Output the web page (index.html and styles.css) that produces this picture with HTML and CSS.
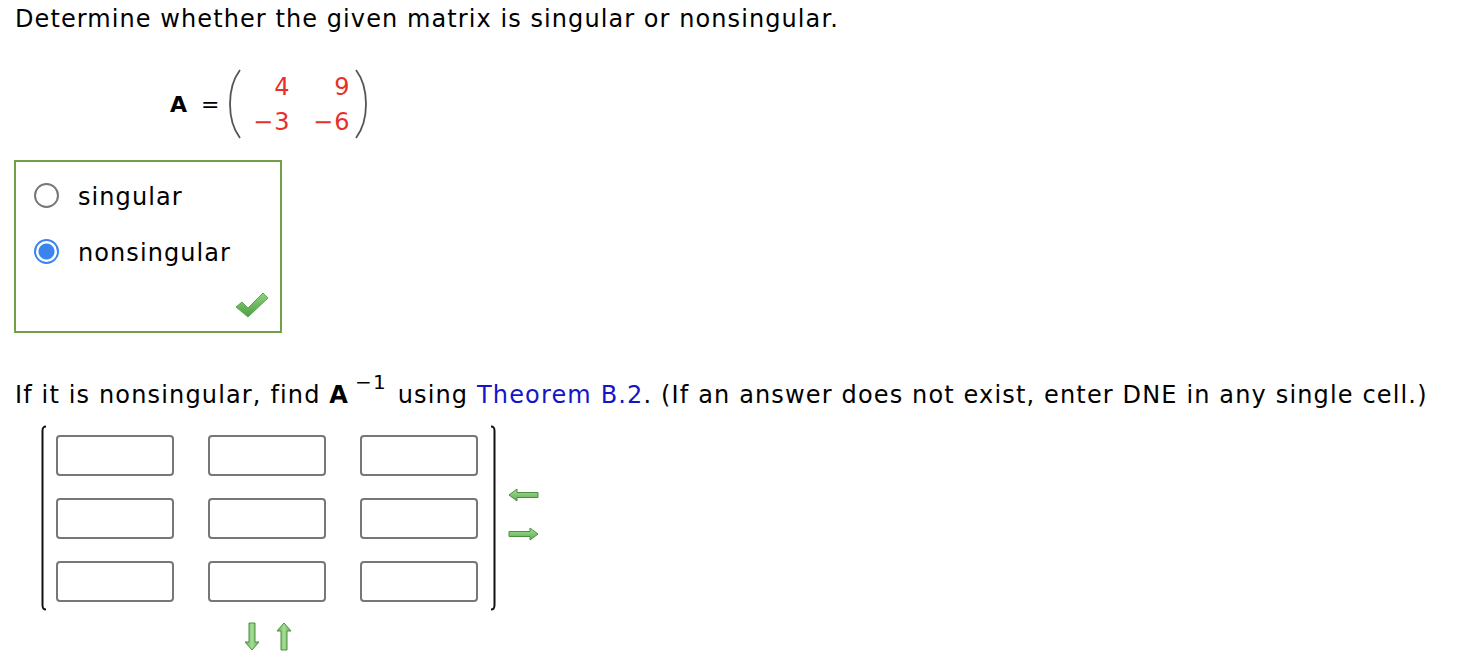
FILE: index.html
```html
<!DOCTYPE html>
<html>
<head>
<meta charset="utf-8">
<link rel="stylesheet" href="styles.css">
</head>
<body>
<div class="page">
  <p class="prompt">Determine whether the given matrix is singular or nonsingular.</p>

  <div class="given">
    <span class="lhs"><b>A</b> =</span>
    <svg class="paren" width="14" height="72" viewBox="0 0 14 72"><path d="M12 2 C3 14 2 28 2 36 C2 44 3 58 12 70" fill="none" stroke="#555" stroke-width="1.8"/></svg>
    <div class="entries">
      <span>4</span><span>9</span>
      <span>&minus;3</span><span>&minus;6</span>
    </div>
    <svg class="paren" width="14" height="72" viewBox="0 0 14 72"><path d="M2 2 C11 14 12 28 12 36 C12 44 11 58 2 70" fill="none" stroke="#555" stroke-width="1.8"/></svg>
  </div>

  <div class="choices">
    <label class="choice"><span class="radio"></span>singular</label>
    <label class="choice"><span class="radio checked"></span>nonsingular</label>
    <svg class="check" width="36" height="30" viewBox="0 0 36 30">
      <defs>
        <linearGradient id="cg" x1="0" y1="0" x2="0" y2="1">
          <stop offset="0" stop-color="#8fd27e"/>
          <stop offset="1" stop-color="#4e9e45"/>
        </linearGradient>
      </defs>
      <path d="M2 17 L8 12 L14 18 L29 3 L34 8 L14 27 Z" fill="url(#cg)" stroke="#5aa850" stroke-width="1" stroke-linejoin="round"/>
    </svg>
  </div>

  <p class="prompt second">If it is nonsingular, find <b>A</b><sup>&minus;1</sup> using <span class="link">Theorem B.2</span>. (If an answer does not exist, enter DNE in any single cell.)</p>

  <div class="answer">
    <div class="matrix-row">
      <svg class="bracket" width="8" height="186" viewBox="0 0 8 186"><path d="M6 1.5 C3 1.5 2.5 3 2.5 6 L2.5 180 C2.5 183 3 184.5 6 184.5" fill="none" stroke="#111" stroke-width="2"/></svg>
      <div class="cells">
        <input class="cell" type="text"><input class="cell" type="text"><input class="cell" type="text">
        <input class="cell" type="text"><input class="cell" type="text"><input class="cell" type="text">
        <input class="cell" type="text"><input class="cell" type="text"><input class="cell" type="text">
      </div>
      <svg class="bracket" width="8" height="186" viewBox="0 0 8 186"><path d="M2 1.5 C5 1.5 5.5 3 5.5 6 L5.5 180 C5.5 183 5 184.5 2 184.5" fill="none" stroke="#111" stroke-width="2"/></svg>
      <div class="col-arrows">
        <svg width="31" height="14" viewBox="0 0 31 14">
          <defs>
            <linearGradient id="hg" x1="0" y1="0" x2="0" y2="1">
              <stop offset="0" stop-color="#a6dd96"/>
              <stop offset="1" stop-color="#5fae52"/>
            </linearGradient>
            <linearGradient id="vg" x1="0" y1="0" x2="1" y2="0">
              <stop offset="0" stop-color="#5fae52"/>
              <stop offset="0.5" stop-color="#a6dd96"/>
              <stop offset="1" stop-color="#5fae52"/>
            </linearGradient>
          </defs>
          <path d="M1 7 L9 1 L9 4.5 L30 4.5 L30 9.5 L9 9.5 L9 13 Z" fill="url(#hg)" stroke="#4a8f40" stroke-width="1" stroke-linejoin="round"/>
        </svg>
        <svg width="31" height="14" viewBox="0 0 31 14"><path d="M30 7 L22 1 L22 4.5 L1 4.5 L1 9.5 L22 9.5 L22 13 Z" fill="url(#hg)" stroke="#4a8f40" stroke-width="1" stroke-linejoin="round"/></svg>
      </div>
    </div>
    <div class="row-arrows">
      <svg width="16" height="29" viewBox="0 0 16 29"><path d="M8 28 L1 20 L5 20 L5 1 L11 1 L11 20 L15 20 Z" fill="url(#vg)" stroke="#4a8f40" stroke-width="1" stroke-linejoin="round"/></svg>
      <svg width="16" height="29" viewBox="0 0 16 29"><path d="M8 1 L1 9 L5 9 L5 28 L11 28 L11 9 L15 9 Z" fill="url(#vg)" stroke="#4a8f40" stroke-width="1" stroke-linejoin="round"/></svg>
    </div>
  </div>
</div>
</body>
</html>
```

FILE: styles.css
```css
html, body {
  margin: 0;
  padding: 0;
  background: #fff;
}
body {
  font-family: "DejaVu Sans", Verdana, sans-serif;
  font-size: 24px;
  color: #000;
}
.page {
  padding: 4px 0 0 15px;
}
.prompt {
  margin: 0;
  line-height: 30px;
  white-space: nowrap;
  letter-spacing: 1.08px;
}
.given {
  display: flex;
  align-items: center;
  margin: 34px 0 0 155px;
  height: 72px;
}
.lhs {
  font-size: 22px;
  margin-right: 9px;
  word-spacing: 7px;
}
.paren {
  display: block;
}
.entries {
  display: grid;
  grid-template-columns: 48px 60px;
  row-gap: 5px;
  color: #e8302a;
  font-size: 24px;
  line-height: 30px;
  margin: 0 4px 0 0;
  letter-spacing: 1px;
}
.entries span {
  text-align: right;
}
.choices {
  width: 264px;
  height: 169px;
  border: 2px solid #73a047;
  margin: 20px 0 0 -1px;
  position: relative;
  box-sizing: content-box;
  padding: 0;
}
.choice {
  display: flex;
  align-items: center;
  height: 30px;
  margin-left: 18px;
  letter-spacing: 1.08px;
}
.choice:first-child {
  margin-top: 20px;
}
.choice + .choice {
  margin-top: 26px;
}
.radio {
  width: 21px;
  height: 21px;
  border: 2px solid #777;
  border-radius: 50%;
  margin-right: 19px;
  box-sizing: content-box;
  flex: none;
  position: relative;
  top: -2px;
}
.radio.checked {
  border: 2px solid #3a84f0;
  background: radial-gradient(circle, #3a84f0 0 7.5px, #fff 8.5px);
}
.check {
  position: absolute;
  right: 10px;
  bottom: 11px;
}
.second {
  margin-top: 47px;
  letter-spacing: 1.15px;
}
sup {
  font-size: 20px;
  vertical-align: 0;
  position: relative;
  top: -14px;
  margin-left: 6px;
  margin-right: 2px;
}
.link {
  color: #1515c8;
}
.answer {
  margin: 14px 0 0 25px;
}
.matrix-row {
  display: flex;
  align-items: center;
}
.bracket {
  display: block;
}
.cells {
  display: grid;
  grid-template-columns: repeat(3, 118px);
  column-gap: 34px;
  row-gap: 22px;
  margin: 0 11px 0 8px;
}
.cell {
  box-sizing: border-box;
  width: 118px;
  height: 41px;
  border: 2px solid #777;
  border-radius: 4px;
  margin: 0;
  padding: 0;
  background: #fff;
  font: inherit;
}
.col-arrows {
  display: flex;
  flex-direction: column;
  gap: 25px;
  margin-left: 11px;
  margin-top: -8px;
}
.col-arrows svg, .row-arrows svg {
  display: block;
}
.row-arrows {
  display: flex;
  gap: 16px;
  width: 455px;
  justify-content: center;
  margin-top: 11px;
}
```
